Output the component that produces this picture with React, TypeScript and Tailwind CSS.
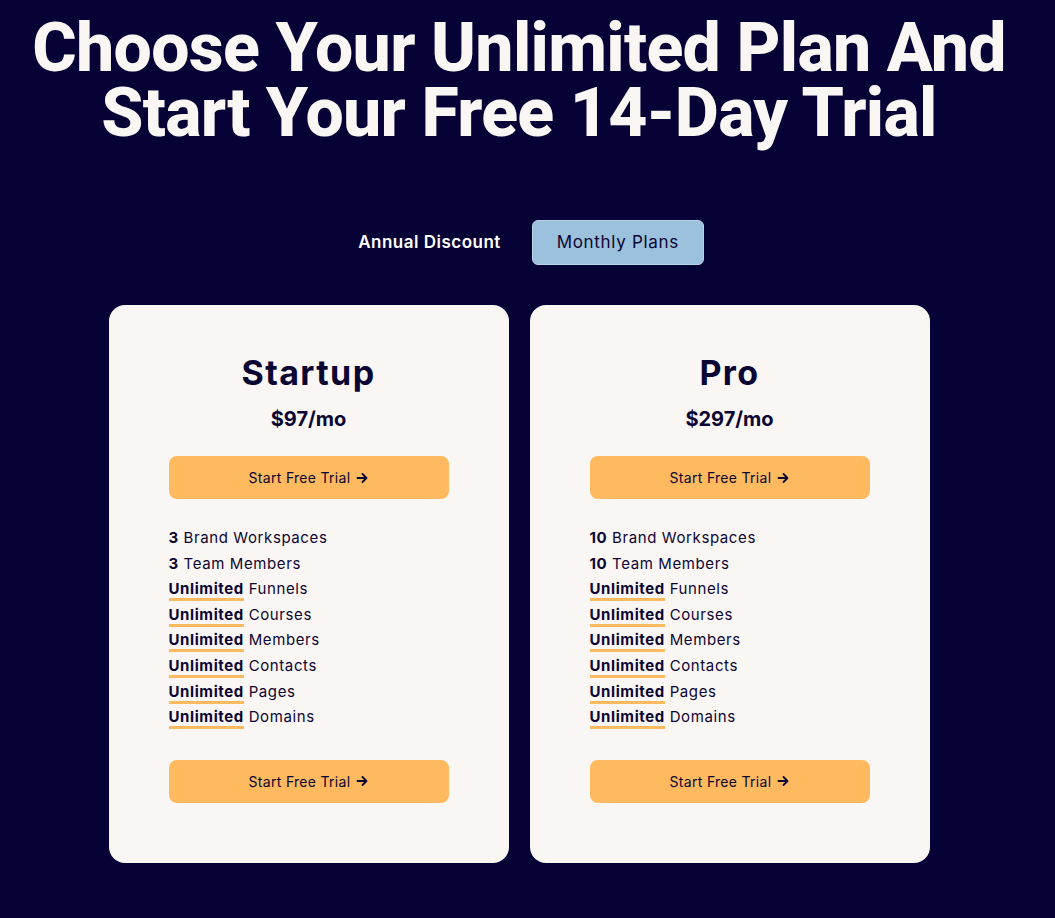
import React from 'react';

type Plan = {
  name: string;
  price: string;
  count: string;
};

const plans: Plan[] = [
  { name: 'Startup', price: '$97/mo', count: '3' },
  { name: 'Pro', price: '$297/mo', count: '10' },
];

const unlimited = ['Funnels', 'Courses', 'Members', 'Contacts', 'Pages', 'Domains'];

const Arrow = () => (
  <svg width="12" height="12" viewBox="0 0 12 12" fill="none" stroke="currentColor" strokeWidth="1.8" strokeLinecap="round" strokeLinejoin="round">
    <path d="M1.5 6h9M6.5 2l4 4-4 4" />
  </svg>
);

const TrialButton = () => (
  <button
    type="button"
    className="w-full h-[43px] rounded-lg bg-[#ffb95e] text-[#0b0533] text-[14px] flex items-center justify-center gap-[6px] tracking-[0.3px]"
  >
    Start Free Trial <Arrow />
  </button>
);

const PlanCard: React.FC<{ plan: Plan }> = ({ plan }) => (
  <div className="w-[400px] h-[558px] rounded-2xl bg-[#faf6f3] px-[60px] pt-[50px] text-[#0b0533] flex flex-col">
    <h2 className="text-center text-[34px] leading-[36px] font-bold tracking-[1.4px]">{plan.name}</h2>
    <p className="text-center text-[20px] font-bold mt-[14px] leading-[28px]">{plan.price}</p>
    <div className="mt-[23px]">
      <TrialButton />
    </div>
    <ul className="mt-[26px] text-[15px] leading-[25.6px] tracking-[0.6px]">
      <li><b>{plan.count}</b> Brand Workspaces</li>
      <li><b>{plan.count}</b> Team Members</li>
      {unlimited.map(item => (
        <li key={item}>
          <b className="border-b-[3px] border-[#ffb95e] leading-[19px] inline-block">Unlimited</b> {item}
        </li>
      ))}
    </ul>
    <div className="mt-[30px]">
      <TrialButton />
    </div>
  </div>
);

export default function App() {
  return (
    <div className="min-h-[918px] bg-[#070236] font-['Inter',sans-serif] pb-[60px]">
      <div className="w-[1038px] flex flex-col items-center">
        <h1 className="text-[#faf6f3] text-center font-extrabold font-['Roboto',sans-serif] text-[68px] leading-[65px] tracking-[-0.7px] pt-[16px]">
          Choose Your Unlimited Plan And<br />Start Your Free 14-Day Trial
        </h1>
        <div className="mt-[74px] flex items-center gap-[31px] ml-[24px]">
          <span className="text-white text-[17px] font-semibold tracking-[0.5px]">Annual Discount</span>
          <button type="button" className="w-[172px] h-[45px] rounded-md bg-[#9bc1dc] border border-[#b8d4e8] text-[#0b0533] text-[17px] tracking-[0.7px]">
            Monthly Plans
          </button>
        </div>
        <div className="mt-[40px] flex gap-[21px]">
          {plans.map(plan => (
            <PlanCard key={plan.name} plan={plan} />
          ))}
        </div>
      </div>
    </div>
  );
}
